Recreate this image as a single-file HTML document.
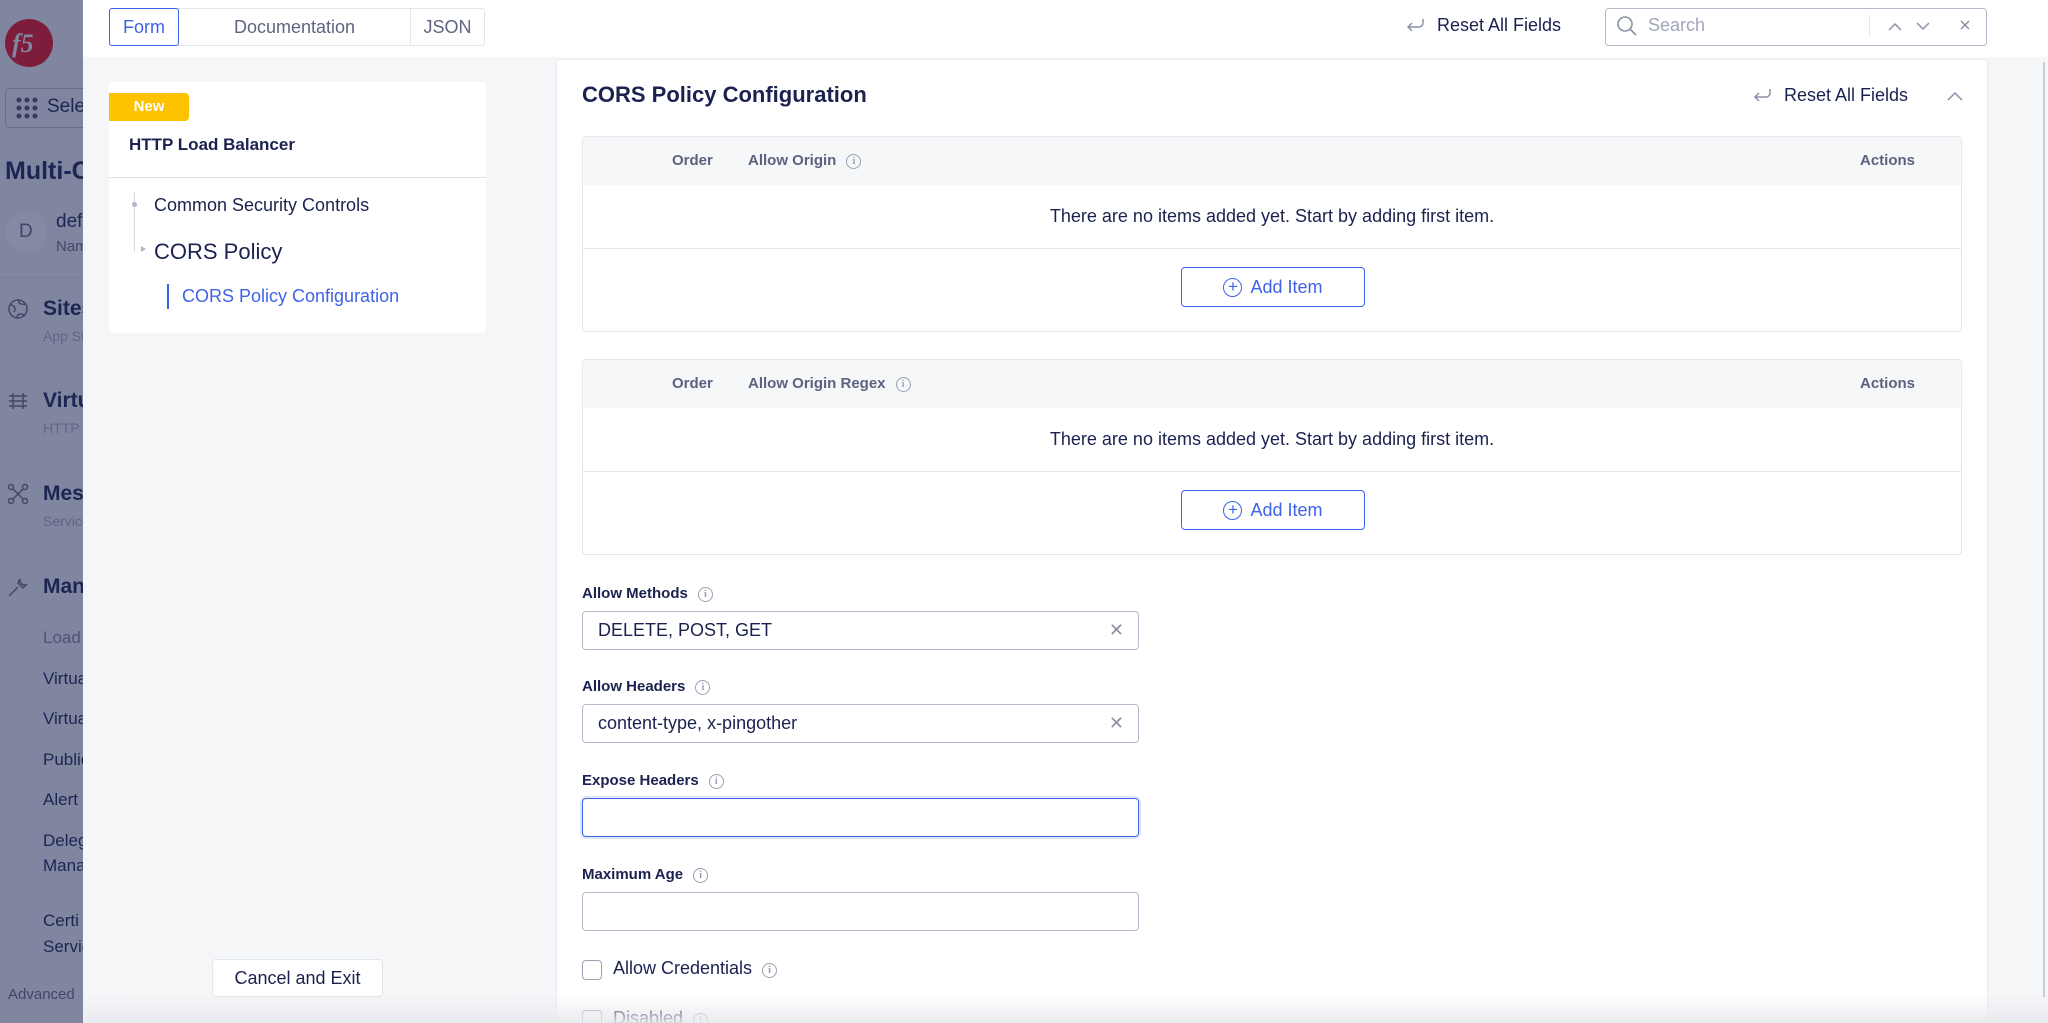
<!DOCTYPE html>
<html><head><meta charset="utf-8"><style>
*{box-sizing:border-box;margin:0;padding:0}
html,body{width:2048px;height:1023px;overflow:hidden}
body{background:#f5f6f8;font-family:"Liberation Sans",sans-serif;color:#1b2250;position:relative}
.a{position:absolute;white-space:nowrap}
.side{left:0;top:0;width:83px;height:1023px;background:#80869f;overflow:hidden;color:#1c2553}
.side .t{position:absolute;white-space:nowrap}
.top{left:83px;top:0;width:1965px;height:57px;background:#fff}
.tabs{left:109px;top:8px;width:376px;height:38px;border:1px solid #e2e5ec;border-radius:3px;display:flex;font-size:18px;color:#5e6580}
.tabs div{display:flex;align-items:center;justify-content:center}
.card{background:#fff;border-radius:4px}
.lbl{font-size:15px;font-weight:bold;color:#1b2250}
.inp{background:#fff;border:1.5px solid #b4b8c8;border-radius:4px;height:39px;width:557px;left:582px;font-size:18px;padding-left:15px;line-height:36px}
.x{position:absolute;right:14px;top:0;color:#8a90a6;font-size:18px}
.info{display:inline-block;width:15px;height:15px;border:1.3px solid #9aa0b5;border-radius:50%;font-size:10px;line-height:13px;text-align:center;color:#9aa0b5;font-weight:bold;margin-left:10px;vertical-align:1px;font-family:"Liberation Serif",serif}
.tbl{left:582px;width:1380px;border:1px solid #e6e8ee;border-radius:4px;background:#fff;overflow:hidden}
.th{height:48px;background:#f6f7f9;font-size:15px;font-weight:bold;color:#5b6280;position:relative}
.th span{position:absolute;top:15px;white-space:nowrap}
.th span .info{position:static}
.btn{position:absolute;left:598px;width:184px;height:40px;border:1.5px solid #3f63e8;border-radius:4px;color:#3f63e8;font-size:18px;display:flex;align-items:center;justify-content:center;gap:8px}
.pl{width:19px;height:19px;border:1.5px solid #3f63e8;border-radius:50%;font-size:17px;line-height:15px;text-align:center}
</style></head><body>

<div class="a side">
  <svg class="a" style="left:4px;top:18px" width="50" height="50"><circle cx="25" cy="25" r="24" fill="#7e1c3c"/><text x="8" y="34" font-family="Liberation Serif" font-style="italic" font-weight="bold" font-size="26" fill="#80869f">f5</text></svg>
  <div class="a" style="left:5px;top:88px;width:100px;height:40px;border:1.5px solid #666c88;border-radius:5px"></div>
  <svg class="a" style="left:15px;top:96px" width="24" height="24" fill="#353c62"><circle cx="4" cy="4" r="2.5"/><circle cx="12" cy="4" r="2.5"/><circle cx="20" cy="4" r="2.5"/><circle cx="4" cy="12" r="2.5"/><circle cx="12" cy="12" r="2.5"/><circle cx="20" cy="12" r="2.5"/><circle cx="4" cy="20" r="2.5"/><circle cx="12" cy="20" r="2.5"/><circle cx="20" cy="20" r="2.5"/></svg>
  <div class="t" style="left:47px;top:96px;font-size:19px">Select</div>
  <div class="t" style="left:5px;top:157px;font-size:25px;font-weight:bold">Multi-Cloud</div>
  <div class="a" style="left:6px;top:212px;width:40px;height:40px;border-radius:50%;background:#858aa4"></div>
  <div class="t" style="left:19px;top:221px;font-size:19px;color:#404766">D</div>
  <div class="t" style="left:56px;top:211px;font-size:19px">default</div>
  <div class="t" style="left:56px;top:238px;font-size:15px;color:#414867">Namespace</div>
  <div class="a" style="left:0;top:277px;width:83px;height:1px;background:#777d98"></div>
  <svg class="a" style="left:7px;top:298px" width="22" height="22" fill="none" stroke="#414867" stroke-width="1.5"><circle cx="11" cy="11" r="9"/><path d="M4 7c4 1 5 4 3 7M12 2c-1 4 3 5 7 4M10 20c0-4 3-5 7-3"/></svg>
  <div class="t" style="left:43px;top:297px;font-size:21px;font-weight:bold">Sites</div>
  <div class="t" style="left:43px;top:328px;font-size:14px;color:#5f6686">App Stack</div>
  <svg class="a" style="left:7px;top:390px" width="22" height="22" fill="none" stroke="#414867" stroke-width="1.5"><path d="M2 6h18M2 11h18M2 16h18M6 3v16M16 3v16"/></svg>
  <div class="t" style="left:43px;top:389px;font-size:21px;font-weight:bold">Virtual</div>
  <div class="t" style="left:43px;top:420px;font-size:14px;color:#5f6686">HTTP</div>
  <svg class="a" style="left:7px;top:483px" width="22" height="22" fill="none" stroke="#414867" stroke-width="1.5"><circle cx="4" cy="4" r="2.5"/><circle cx="18" cy="4" r="2.5"/><circle cx="4" cy="18" r="2.5"/><circle cx="18" cy="18" r="2.5"/><path d="M6 6l10 10M16 6L6 16"/></svg>
  <div class="t" style="left:43px;top:482px;font-size:21px;font-weight:bold">Mesh</div>
  <div class="t" style="left:43px;top:513px;font-size:14px;color:#5f6686">Service</div>
  <svg class="a" style="left:7px;top:576px" width="22" height="22" fill="none" stroke="#414867" stroke-width="1.5"><path d="M2 20l9-9M13 3a5 5 0 0 0 6 6l-3 3-5-5z"/></svg>
  <div class="t" style="left:43px;top:575px;font-size:21px;font-weight:bold">Manage</div>
  <div class="t" style="left:43px;top:628px;font-size:17px;color:#4d5477">Load</div>
  <div class="t" style="left:43px;top:669px;font-size:17px">Virtual</div>
  <div class="t" style="left:43px;top:709px;font-size:17px">Virtual</div>
  <div class="t" style="left:43px;top:750px;font-size:17px">Public</div>
  <div class="t" style="left:43px;top:790px;font-size:17px">Alert</div>
  <div class="t" style="left:43px;top:831px;font-size:17px">Delegated</div>
  <div class="t" style="left:43px;top:856px;font-size:17px">Manage</div>
  <div class="t" style="left:43px;top:911px;font-size:17px">Certi</div>
  <div class="t" style="left:43px;top:937px;font-size:17px">Service</div>
  <div class="t" style="left:8px;top:986px;font-size:15px;color:#414867">Advanced</div>
</div>

<div class="a top"></div>
<div class="a tabs">
  <div style="width:70px;border:1.5px solid #3f63e8;border-radius:3px;color:#3f63e8;margin:-1px 0 -1px -1px">Form</div>
  <div style="width:232px;border-right:1px solid #e2e5ec">Documentation</div>
  <div style="flex:1">JSON</div>
</div>
<svg class="a" style="left:1405px;top:17px" width="20" height="18" fill="none" stroke="#8a90a6" stroke-width="1.5"><path d="M18 2v4a4 4 0 0 1-4 4H3M7 6L3 10l4 4"/></svg>
<div class="a" style="left:1437px;top:15px;font-size:18px">Reset All Fields</div>
<div class="a" style="left:1605px;top:8px;width:382px;height:38px;border:1.5px solid #b4b8c8;border-radius:4px;background:#fff"></div>
<svg class="a" style="left:1616px;top:15px" width="22" height="22" fill="none" stroke="#8a90a6" stroke-width="1.6"><circle cx="9" cy="9" r="7"/><path d="M14 14l6 6"/></svg>
<div class="a" style="left:1648px;top:15px;font-size:18px;color:#a0a5b8">Search</div>
<div class="a" style="left:1869px;top:15px;width:1px;height:22px;background:#e2e5ec"></div>
<svg class="a" style="left:1887px;top:18px" width="90" height="16" fill="none" stroke="#8a90a6" stroke-width="1.5"><path d="M2 12l6-6 6 6M30 5l6 6 6-6M74 3l8 8M82 3l-8 8"/></svg>

<div class="a card" style="left:109px;top:82px;width:377px;height:251px"></div>
<div class="a" style="left:109px;top:93px;width:80px;height:28px;background:#fdc300;border-radius:0 4px 4px 0;color:#fff;font-weight:bold;font-size:15px;text-align:center;line-height:28px">New</div>
<div class="a" style="left:129px;top:135px;font-size:17px;font-weight:bold">HTTP Load Balancer</div>
<div class="a" style="left:109px;top:177px;width:377px;height:1px;background:#dfe2e9"></div>
<div class="a" style="left:134px;top:192px;width:1px;height:60px;background:#d5d8e0"></div>
<div class="a" style="left:132px;top:202px;width:5px;height:5px;border-radius:50%;background:#b0b5c6"></div>
<div class="a" style="left:154px;top:195px;font-size:18px">Common Security Controls</div>
<div class="a" style="left:154px;top:239px;font-size:22px">CORS Policy</div>
<div class="a" style="left:141px;top:246px;width:0;height:0;border-left:5px solid #b0b5c6;border-top:3px solid transparent;border-bottom:3px solid transparent"></div>
<div class="a" style="left:167px;top:284px;width:2px;height:25px;background:#3f63e8"></div>
<div class="a" style="left:182px;top:286px;font-size:18px;color:#3f63e8">CORS Policy Configuration</div>

<div class="a card" style="left:212px;top:959px;width:171px;height:38px;border:1px solid #e2e5ec;font-size:18px;text-align:center;line-height:36px">Cancel and Exit</div>

<div class="a card" style="left:556px;top:59px;width:1432px;height:964px;border:1px solid #e9ebf0"></div>
<div class="a" style="left:582px;top:82px;font-size:22px;font-weight:bold">CORS Policy Configuration</div>
<svg class="a" style="left:1752px;top:87px" width="20" height="18" fill="none" stroke="#8a90a6" stroke-width="1.5"><path d="M18 2v4a4 4 0 0 1-4 4H3M7 6L3 10l4 4"/></svg>
<div class="a" style="left:1784px;top:85px;font-size:18px">Reset All Fields</div>
<svg class="a" style="left:1946px;top:90px" width="18" height="12" fill="none" stroke="#8a90a6" stroke-width="1.5"><path d="M2 10l7-7 7 7"/></svg>

<div class="a tbl" style="top:136px;height:196px">
  <div class="th"><span style="left:89px">Order</span><span style="left:165px">Allow Origin<i class="info" style="font-style:normal">i</i></span><span style="left:1277px">Actions</span></div>
  <div style="height:63px;font-size:18px;text-align:center;line-height:63px">There are no items added yet. Start by adding first item.</div>
  <div style="height:1px;background:#e6e8ee"></div>
  <div class="btn" style="top:130px"><div class="pl">+</div>Add Item</div>
</div>
<div class="a tbl" style="top:359px;height:196px">
  <div class="th"><span style="left:89px">Order</span><span style="left:165px">Allow Origin Regex<i class="info" style="font-style:normal">i</i></span><span style="left:1277px">Actions</span></div>
  <div style="height:63px;font-size:18px;text-align:center;line-height:63px">There are no items added yet. Start by adding first item.</div>
  <div style="height:1px;background:#e6e8ee"></div>
  <div class="btn" style="top:130px"><div class="pl">+</div>Add Item</div>
</div>

<div class="a lbl" style="left:582px;top:585px">Allow Methods<span class="info">i</span></div>
<div class="a inp" style="top:611px">DELETE, POST, GET<span class="x">✕</span></div>
<div class="a lbl" style="left:582px;top:678px">Allow Headers<span class="info">i</span></div>
<div class="a inp" style="top:704px">content-type, x-pingother<span class="x">✕</span></div>
<div class="a lbl" style="left:582px;top:772px">Expose Headers<span class="info">i</span></div>
<div class="a inp" style="top:798px;border-color:#3f63e8;box-shadow:0 0 0 2px #dfe6fb"></div>
<div class="a lbl" style="left:582px;top:866px">Maximum Age<span class="info">i</span></div>
<div class="a inp" style="top:892px"></div>
<div class="a" style="left:582px;top:960px;width:20px;height:20px;border:1.5px solid #9aa0b5;border-radius:4px"></div>
<div class="a" style="left:613px;top:958px;font-size:18px">Allow Credentials<span class="info">i</span></div>
<div class="a" style="left:582px;top:1010px;width:20px;height:20px;border:1.5px solid #9aa0b5;border-radius:4px"></div>
<div class="a" style="left:613px;top:1008px;font-size:18px">Disabled<span class="info">i</span></div>
<div class="a" style="left:83px;top:995px;width:1965px;height:28px;background:linear-gradient(rgba(240,241,244,0),rgba(232,233,237,.9))"></div>
<div class="a" style="left:2043px;top:62px;width:2px;height:935px;background:#c8ccd6"></div>
</body></html>
